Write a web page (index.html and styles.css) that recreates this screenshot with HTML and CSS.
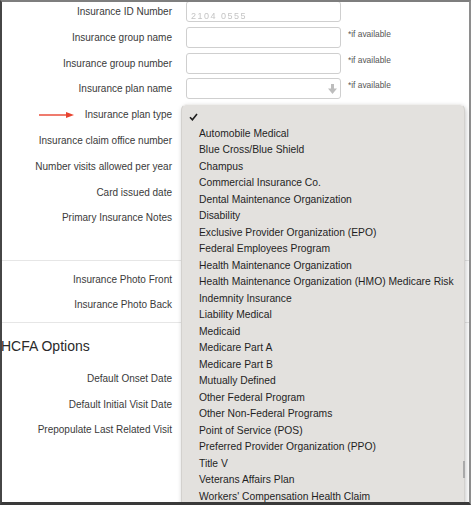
FILE: index.html
```html
<!DOCTYPE html>
<html>
<head>
<meta charset="utf-8">
<link rel="stylesheet" href="styles.css">
</head>
<body>
<div class="frame">
  <div class="form">
    <div class="row r-first">
      <div class="label">Insurance ID Number</div>
      <div class="input"><span class="blurred">2104 0555</span></div>
    </div>
    <div class="row">
      <div class="label">Insurance group name</div>
      <div class="input"></div>
      <div class="hint">*if available</div>
    </div>
    <div class="row">
      <div class="label">Insurance group number</div>
      <div class="input"></div>
      <div class="hint">*if available</div>
    </div>
    <div class="row">
      <div class="label">Insurance plan name</div>
      <div class="input select">
        <svg class="sel-arrow" width="9" height="10" viewBox="0 0 9 10"><rect x="3" y="0" width="3" height="5" fill="#bdbdbd"/><polygon points="0,4.5 9,4.5 4.5,10" fill="#bdbdbd"/></svg>
      </div>
      <div class="hint">*if available</div>
    </div>
    <div class="row">
      <div class="label"><svg class="red-arrow" width="35" height="8" viewBox="0 0 35 8"><line x1="0" y1="4" x2="28" y2="4" stroke="#e8432f" stroke-width="1.4"/><polygon points="27,1 35,4 27,7" fill="#e8432f"/></svg>Insurance plan type</div>
      <div class="input"></div>
    </div>
    <div class="row">
      <div class="label">Insurance claim office number</div>
    </div>
    <div class="row">
      <div class="label">Number visits allowed per year</div>
    </div>
    <div class="row">
      <div class="label">Card issued date</div>
    </div>
    <div class="row">
      <div class="label">Primary Insurance Notes</div>
    </div>
    <div class="divider d1"></div>
    <div class="row r-photo1">
      <div class="label">Insurance Photo Front</div>
    </div>
    <div class="row r-photo2">
      <div class="label">Insurance Photo Back</div>
    </div>
    <div class="divider d2"></div>
    <h2 class="section-title">HCFA Options</h2>
    <div class="row r-hcfa1">
      <div class="label">Default Onset Date</div>
    </div>
    <div class="row r-hcfa">
      <div class="label">Default Initial Visit Date</div>
    </div>
    <div class="row r-hcfa">
      <div class="label">Prepopulate Last Related Visit</div>
    </div>
  </div>

  <div class="menu">
    <div class="item checked"><svg class="check" width="9" height="8" viewBox="0 0 9 8"><polyline points="1,4.2 3.4,6.8 8,1" fill="none" stroke="#1e1e1e" stroke-width="1.6"/></svg></div>
    <div class="item">Automobile Medical</div>
    <div class="item">Blue Cross/Blue Shield</div>
    <div class="item">Champus</div>
    <div class="item">Commercial Insurance Co.</div>
    <div class="item">Dental Maintenance Organization</div>
    <div class="item">Disability</div>
    <div class="item">Exclusive Provider Organization (EPO)</div>
    <div class="item">Federal Employees Program</div>
    <div class="item">Health Maintenance Organization</div>
    <div class="item">Health Maintenance Organization (HMO) Medicare Risk</div>
    <div class="item">Indemnity Insurance</div>
    <div class="item">Liability Medical</div>
    <div class="item">Medicaid</div>
    <div class="item">Medicare Part A</div>
    <div class="item">Medicare Part B</div>
    <div class="item">Mutually Defined</div>
    <div class="item">Other Federal Program</div>
    <div class="item">Other Non-Federal Programs</div>
    <div class="item">Point of Service (POS)</div>
    <div class="item">Preferred Provider Organization (PPO)</div>
    <div class="item">Title V</div>
    <div class="item">Veterans Affairs Plan</div>
    <div class="item">Workers' Compensation Health Claim</div>
    <div class="scroll-thumb"></div>
  </div>
</div>
</body>
</html>
```
FILE: styles.css
```css
html, body {
  margin: 0;
  padding: 0;
  background: #ffffff;
}
body {
  width: 474px;
  height: 505px;
  overflow: hidden;
  font-family: "Liberation Sans", Arial, Helvetica, sans-serif;
}
.frame {
  position: relative;
  box-sizing: border-box;
  width: 471px;
  height: 505px;
  border-top: 2px solid #7e7e7e;
  border-left: 2px solid #464646;
  border-bottom: 3px solid #3a3a3a;
  border-right: 2px solid #8e8e8e;
  background: #ffffff;
  overflow: hidden;
}
.form {
  display: flex;
  flex-direction: column;
  margin-top: -1px;
}
.row {
  display: grid;
  grid-template-columns: 170px 155px auto;
  column-gap: 14px;
  height: 21px;
  align-items: center;
  margin-top: 4.8px;
}
.row.r-first { margin-top: 0; }
.label {
  grid-column: 1;
  display: flex;
  justify-content: flex-end;
  align-items: center;
  font-size: 10px;
  color: #3a3a3a;
  white-space: nowrap;
}
.red-arrow {
  margin-right: 11px;
  flex: none;
}
.input {
  grid-column: 2;
  box-sizing: border-box;
  height: 21px;
  border: 1px solid #cfcfcf;
  border-radius: 3px;
  background: #fff;
  position: relative;
  display: flex;
  align-items: center;
  overflow: hidden;
}
.select {
  justify-content: flex-end;
  padding-right: 3px;
}
.sel-arrow { margin-top: 1px; }
.blurred {
  font-size: 9px;
  color: #c4c4c4;
  letter-spacing: 1.5px;
  padding-left: 4px;
  margin-top: 9px;
  filter: blur(0.7px);
}
.hint {
  grid-column: 3;
  margin-left: -7px;
  align-self: start;
  padding-top: 2px;
  font-size: 8.4px;
  color: #555;
  white-space: nowrap;
}
.divider {
  height: 1px;
  background: #e6e6e6;
}
.d1 { margin-top: 31.6px; }
.row.r-photo1 { margin-top: 8.5px; }
.row.r-photo2 { margin-top: 4px; }
.d2 { margin-top: 6.5px; }
.section-title {
  margin: 13px 0 0 -1px;
  font-size: 14px;
  line-height: 20px;
  height: 20px;
  font-weight: normal;
  color: #2a2a2a;
}
.row.r-hcfa1 { margin-top: 12.5px; }
.row.r-hcfa { margin-top: 4.5px; }

.menu {
  position: absolute;
  left: 179px;
  top: 102px;
  width: 284px;
  height: 420px;
  box-sizing: border-box;
  padding-top: 4px;
  background: #e3e1de;
  border: 1px solid #d3d1ce;
  border-top-color: #f0efed;
  border-radius: 6px;
  box-shadow: 1px 2px 5px rgba(0,0,0,0.22);
}
.item {
  height: 16.5px;
  line-height: 16.5px;
  padding-left: 17px;
  font-size: 10.3px;
  color: #1f1f1f;
  white-space: nowrap;
}
.item.checked {
  padding-left: 7px;
  display: flex;
  align-items: center;
}
.scroll-thumb {
  position: absolute;
  right: -1px;
  top: 356px;
  width: 2px;
  height: 17px;
  background: #a9a9a9;
}
```
